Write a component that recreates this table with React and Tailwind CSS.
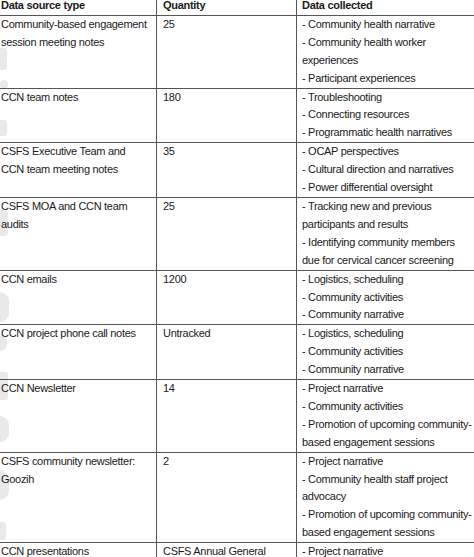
import React from "react";

const rows = [
  {
    a: ["Community-based engagement", "session meeting notes"],
    b: "25",
    c: ["- Community health narrative", "- Community health worker", "experiences", "- Participant experiences"],
  },
  { a: ["CCN team notes"], b: "180", c: ["- Troubleshooting", "- Connecting resources", "- Programmatic health narratives"] },
  {
    a: ["CSFS Executive Team and", "CCN team meeting notes"],
    b: "35",
    c: ["- OCAP perspectives", "- Cultural direction and narratives", "- Power differential oversight"],
  },
  {
    a: ["CSFS MOA and CCN team", "audits"],
    b: "25",
    c: ["- Tracking new and previous", "participants and results", "- Identifying community members", "due for cervical cancer screening"],
  },
  { a: ["CCN emails"], b: "1200", c: ["- Logistics, scheduling", "- Community activities", "- Community narrative"] },
  { a: ["CCN project phone call notes"], b: "Untracked", c: ["- Logistics, scheduling", "- Community activities", "- Community narrative"] },
  {
    a: ["CCN Newsletter"],
    b: "14",
    c: ["- Project narrative", "- Community activities", "- Promotion of upcoming community-", "based engagement sessions"],
  },
  {
    a: ["CSFS community newsletter:", "Goozih"],
    b: "2",
    c: ["- Project narrative", "- Community health staff project", "advocacy", "- Promotion of upcoming community-", "based engagement sessions"],
  },
  { a: ["CCN presentations"], b: "CSFS Annual General", c: ["- Project narrative"] },
];

function Lines({ items }) {
  return (
    <>
      {items.map((t, i) => (
        <div key={i} className="whitespace-nowrap">
          {t}
        </div>
      ))}
    </>
  );
}

const marks = [
  "top-[48px] h-[22px] w-[7px] rounded-r-[3px]",
  "top-[80px] h-[9px] w-[8px] rounded-full",
  "top-[120px] h-[16px] w-[7px] rounded-r-[3px]",
  "top-[210px] h-[26px] w-[8px] rounded-r-[4px]",
  "top-[292px] h-[30px] w-[9px] rounded-r-full",
  "top-[335px] h-[16px] w-[7px] rounded-r-full",
  "top-[372px] h-[28px] w-[8px] rounded-r-[3px]",
  "top-[416px] h-[26px] w-[9px] rounded-r-full",
  "top-[470px] h-[30px] w-[9px] rounded-r-full",
  "top-[522px] h-[18px] w-[6px] rounded-r-[3px]",
];

export default function App() {
  return (
    <div
      className="relative w-[474px] h-[557px] overflow-hidden bg-white text-[11px] tracking-[-0.3px] leading-[17.9px] text-[#1a1a1a]"
      style={{ fontFamily: '"Liberation Sans", Arial, sans-serif' }}
    >
      {marks.map((m, i) => (
        <div key={i} className={`absolute left-0 bg-[#e9e9e9] ${m}`} />
      ))}
      <div className="relative mt-[-3px]">
        <div className="grid grid-cols-[157px_140px_1fr] border-b border-[#555] font-bold">
          <div className="border-r border-[#555] pl-[1px]">Data source type</div>
          <div className="border-r border-[#555] pl-[6px]">Quantity</div>
          <div className="pl-[5px]">Data collected</div>
        </div>
        {rows.map((r, i) => (
          <div key={i} className="grid grid-cols-[157px_140px_1fr] border-b border-[#555]">
            <div className="border-r border-[#555] pl-[1px]">
              <Lines items={r.a} />
            </div>
            <div className="border-r border-[#555] pl-[6px] whitespace-nowrap">{r.b}</div>
            <div className="pl-[5px]">
              <Lines items={r.c} />
            </div>
          </div>
        ))}
      </div>
    </div>
  );
}
